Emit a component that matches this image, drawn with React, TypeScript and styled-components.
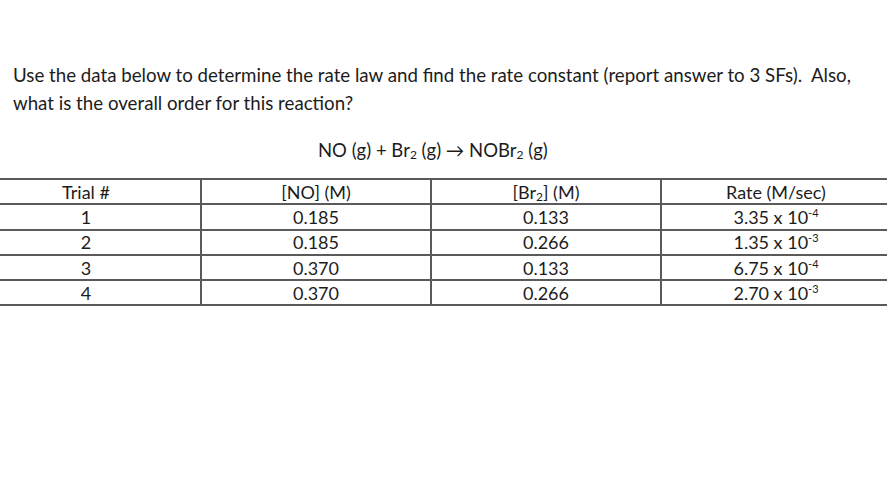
import React from "react";
import styled, { createGlobalStyle } from "styled-components";

const Global = createGlobalStyle`
  html, body { margin: 0; padding: 0; background: #fff; }
  body { width: 887px; height: 501px; overflow: hidden; font-family: Lato, "Open Sans", sans-serif; color: #1c1c1c; }
`;

const Page = styled.div`
  padding-top: 61px;
`;

const Question = styled.p`
  margin: 0 0 0 13px;
  font-size: 18.7px;
  line-height: 28px;
`;

const Equation = styled.p`
  margin: 21px 0 0 318px;
  font-size: 18.5px;
  line-height: 24px;
`;

const Table = styled.table`
  margin: 16px 0 0 -30px;
  width: 922px;
  border-collapse: collapse;
  table-layout: fixed;
`;

const Th = styled.th`
  font-weight: normal;
  font-size: 18px;
  line-height: 22px;
  height: 23.3px;
  padding: 0;
  text-align: center;
  border: 2px solid #5a5a5a;
`;

const Td = styled.td`
  font-size: 18px;
  line-height: 22px;
  height: 23.3px;
  padding: 0;
  text-align: center;
  border: 2px solid #5a5a5a;
`;

const Sup = styled.sup`
  font-size: 11px;
  vertical-align: 7px;
  line-height: 0;
`;

const Sub = styled.sub`
  font-size: 12px;
  vertical-align: -2px;
  line-height: 0;
`;

const rows: [string, string, string, string, string][] = [
  ["1", "0.185", "0.133", "3.35 x 10", "-4"],
  ["2", "0.185", "0.266", "1.35 x 10", "-3"],
  ["3", "0.370", "0.133", "6.75 x 10", "-4"],
  ["4", "0.370", "0.266", "2.70 x 10", "-3"],
];

export default function App() {
  return (
    <Page>
      <Global />
      <Question>
        Use the data below to determine the rate law and find the rate constant (report answer to 3 SFs).&nbsp; Also,
        <br />
        what is the overall order for this reaction?
      </Question>
      <Equation>
        NO (g) + Br<Sub>2</Sub> (g) → NOBr<Sub>2</Sub> (g)
      </Equation>
      <Table>
        <thead>
          <tr>
            <Th>Trial #</Th>
            <Th>[NO] (M)</Th>
            <Th>
              [Br<Sub>2</Sub>] (M)
            </Th>
            <Th>Rate (M/sec)</Th>
          </tr>
        </thead>
        <tbody>
          {rows.map((r) => (
            <tr key={r[0]}>
              <Td>{r[0]}</Td>
              <Td>{r[1]}</Td>
              <Td>{r[2]}</Td>
              <Td>
                {r[3]}
                <Sup>{r[4]}</Sup>
              </Td>
            </tr>
          ))}
        </tbody>
      </Table>
    </Page>
  );
}
